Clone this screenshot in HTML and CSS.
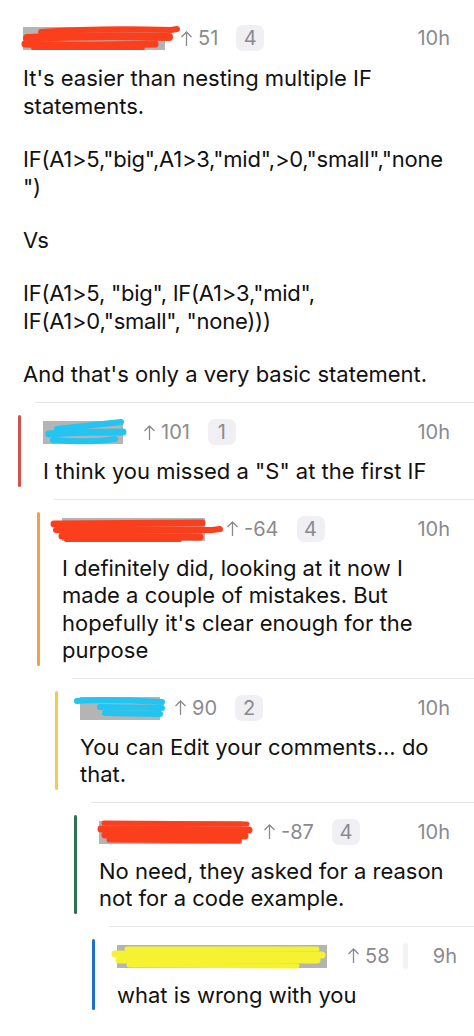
FILE: index.html
```html
<html>

<head>
	<meta charset="utf-8">
	<meta name="viewport" content="width=device-width, initial-scale=1">
	<title>Comments</title>
	<link rel="stylesheet" href="styles.css">
</head>

<body>
	<div class="thread">

		<div class="post">
			<div class="meta">
				<svg class="name" width="142" height="24" viewBox="0 0 142 24">
					<rect x="0" y="1" width="142" height="23" fill="#b4b4b4" />
					<g fill="none" stroke="#fb3f1d" stroke-linecap="round">
						<path d="M18 6 C60 3 110 3 148 4 L154 3" stroke-width="6" />
						<path d="M4 12 C50 10 100 10 146 11" stroke-width="8" />
						<path d="M2 18 C40 20 90 19 132 18" stroke-width="7" />
						<path d="M10 22 L120 22" stroke-width="4" />
					</g>
				</svg>
				<span class="score"><svg class="up" viewBox="0 0 13 17"><path d="M6.5 16 V2 M1.5 7 L6.5 2 L11.5 7" /></svg>51</span>
				<span class="badge">4</span>
				<span class="time">10h</span>
			</div>
			<div class="text">
				<p>It's easier than nesting multiple IF statements.</p>
				<p class="formula">IF(A1&gt;5,"big",A1&gt;3,"mid",&gt;0,"small","none<br>")</p>
				<p>Vs</p>
				<p class="formula">IF(A1&gt;5, "big", IF(A1&gt;3,"mid", IF(A1&gt;0,"small", "none)))</p>
				<p>And that's only a very basic statement.</p>
			</div>
		</div>

		<div class="reply d1">
			<div class="bar red"></div>
			<div class="reply-main">
				<div class="meta">
					<svg class="name" width="85" height="24" viewBox="0 0 85 24">
						<rect x="0" y="1" width="80" height="23" fill="#b4b4b4" />
						<g fill="none" stroke="#22c4f2" stroke-linecap="round">
							<path d="M14 9 C40 6 60 4 78 2" stroke-width="6" />
							<path d="M6 14 C30 12 60 12 80 12" stroke-width="7" />
							<path d="M10 20 C35 22 60 21 72 19" stroke-width="6" />
						</g>
					</svg>
					<span class="score"><svg class="up" viewBox="0 0 13 17"><path d="M6.5 16 V2 M1.5 7 L6.5 2 L11.5 7" /></svg>101</span>
					<span class="badge">1</span>
					<span class="time">10h</span>
				</div>
				<div class="text">
					<p>I think you missed a "S" at the first IF</p>
				</div>
			</div>
		</div>

		<div class="reply d2">
			<div class="bar orange"></div>
			<div class="reply-main">
				<div class="meta">
					<svg class="name" width="149" height="24" viewBox="0 0 149 24">
						<rect x="0" y="1" width="143" height="23" fill="#b4b4b4" />
						<g fill="none" stroke="#fb3f1d" stroke-linecap="round">
							<path d="M-8 7 L140 6" stroke-width="7" />
							<path d="M-6 13 L150 13 L158 12" stroke-width="6" />
							<path d="M0 19 L138 20" stroke-width="7" />
							<path d="M4 23 L118 23" stroke-width="4" />
						</g>
					</svg>
					<span class="score"><svg class="up" viewBox="0 0 13 17"><path d="M6.5 16 V2 M1.5 7 L6.5 2 L11.5 7" /></svg>-64</span>
					<span class="badge">4</span>
					<span class="time">10h</span>
				</div>
				<div class="text">
					<p>I definitely did, looking at it now I made a couple of mistakes. But hopefully it's clear enough for the purpose</p>
				</div>
			</div>
		</div>

		<div class="reply d3">
			<div class="bar yellow"></div>
			<div class="reply-main">
				<div class="meta">
					<svg class="name" width="79" height="24" viewBox="0 0 79 24">
						<rect x="0" y="1" width="80" height="23" fill="#b4b4b4" />
						<g fill="none" stroke="#22c4f2" stroke-linecap="round">
							<path d="M-3 5 C20 3 50 4 82 6" stroke-width="6" />
							<path d="M20 11 L82 12" stroke-width="6" />
							<path d="M25 17 L80 18" stroke-width="6" />
						</g>
					</svg>
					<span class="score"><svg class="up" viewBox="0 0 13 17"><path d="M6.5 16 V2 M1.5 7 L6.5 2 L11.5 7" /></svg>90</span>
					<span class="badge">2</span>
					<span class="time">10h</span>
				</div>
				<div class="text">
					<p>You can Edit your comments... do that.</p>
				</div>
			</div>
		</div>

		<div class="reply d4">
			<div class="bar green"></div>
			<div class="reply-main">
				<div class="meta">
					<svg class="name" width="149" height="24" viewBox="0 0 149 24">
						<rect x="0" y="1" width="143" height="23" fill="#b4b4b4" />
						<g fill="none" stroke="#fb3f1d" stroke-linecap="round">
							<path d="M5 3 L148 4" stroke-width="5" />
							<path d="M2 9 L150 10" stroke-width="7" />
							<path d="M6 15 L146 16" stroke-width="7" />
							<path d="M10 20 L140 21" stroke-width="5" />
						</g>
					</svg>
					<span class="score"><svg class="up" viewBox="0 0 13 17"><path d="M6.5 16 V2 M1.5 7 L6.5 2 L11.5 7" /></svg>-87</span>
					<span class="badge">4</span>
					<span class="time">10h</span>
				</div>
				<div class="text">
					<p>No need, they asked for a reason not for a code example.</p>
				</div>
			</div>
		</div>

		<div class="reply d5">
			<div class="bar blue"></div>
			<div class="reply-main">
				<div class="meta">
					<svg class="name" width="215" height="24" viewBox="0 0 215 24">
						<rect x="0" y="1" width="210" height="23" fill="#b4b4b4" />
						<g fill="none" stroke="#f5f231" stroke-linecap="round">
							<path d="M10 5 L200 5" stroke-width="5" />
							<path d="M-2 10 L205 11" stroke-width="7" />
							<path d="M2 16 L200 16" stroke-width="7" />
							<path d="M12 21 L180 22" stroke-width="5" />
						</g>
					</svg>
					<span class="score"><svg class="up" viewBox="0 0 13 17"><path d="M6.5 16 V2 M1.5 7 L6.5 2 L11.5 7" /></svg>58</span>
					<span class="badge squeezed"></span>
					<span class="time late">9h</span>
				</div>
				<div class="text">
					<p>what is wrong with you</p>
				</div>
			</div>
		</div>

	</div>
</body>

</html>
```

FILE: styles.css
```css
body {
	margin: 0;
	background-color: #fff;
	color: #111;
	font-family: Inter, "Liberation Sans", sans-serif;
}

.post {
	padding: 26px 24px 14px 23px;
}

/* user / score / replies / age */
.meta {
	display: flex;
	align-items: center;
	height: 24px;
	margin-bottom: 14px;
	font-size: 20px;
	color: #8a8a8e;
}

.name {
	flex: none;
	margin-right: 15px;
	overflow: visible;
}

.score {
	display: flex;
	align-items: center;
	gap: 5px;
}

.up {
	width: 13px;
	height: 17px;
	fill: none;
	stroke: #8a8a8e;
	stroke-width: 1.3;
}

.badge {
	display: flex;
	align-items: center;
	justify-content: center;
	min-width: 28px;
	height: 26px;
	margin-left: 18px;
	border-radius: 7px;
	background-color: #f0f0f4;
}

.badge.squeezed {
	min-width: 0;
	width: 5px;
	margin-left: 13px;
	border-radius: 2px;
	background-color: #f3f3f5;
}

.time {
	margin-left: auto;
}

.time.late {
	margin-right: -7px;
}

.text {
	font-size: 22px;
	line-height: 28px;
	overflow-wrap: anywhere;
}

.text p {
	margin: 0 0 25px;
}

.text p:last-child {
	margin-bottom: 0;
}

.text .formula {
	letter-spacing: -0.25px;
}

/* nested replies */
.reply {
	display: flex;
}

.reply-main {
	flex: 1;
	min-width: 0;
	margin-left: 14px;
	border-top: 1px solid #e7e7ea;
	padding: 17px 24px 13px 8px;
}

.reply .text {
	line-height: 27.5px;
}

.bar {
	flex: none;
	width: 3px;
	margin: 13px 0 12px;
	border-radius: 2px;
}

.d1 { margin-left: 18px; }
.d2 { margin-left: 37px; }
.d3 { margin-left: 55px; }
.d4 { margin-left: 74px; }
.d5 { margin-left: 92px; }

.red { background-color: #d0524a; }
.orange { background-color: #f0a04b; }
.yellow { background-color: #f2cc44; }
.green { background-color: #2f6f55; }
.blue { background-color: #1d6fcf; }
```
